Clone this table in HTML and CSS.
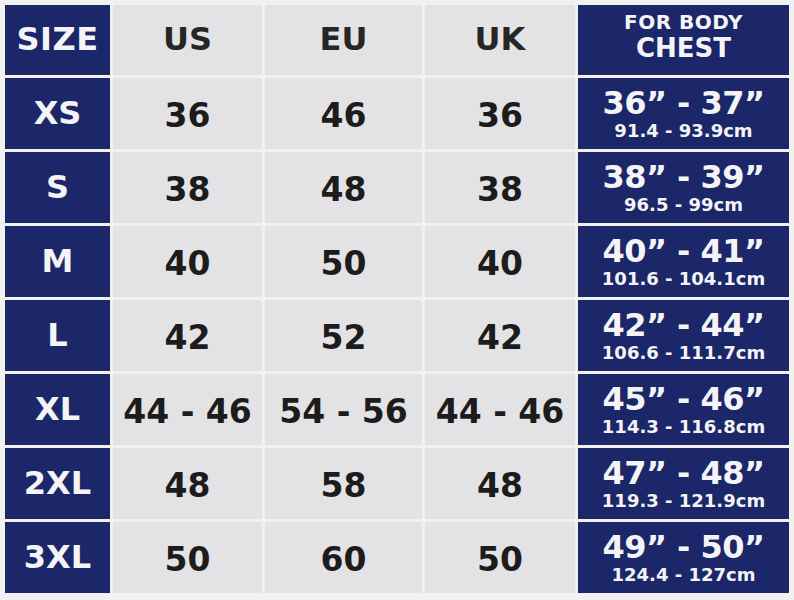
FILE: index.html
```html
<!DOCTYPE html>
<html>
<head>
<meta charset="utf-8">
<link rel="stylesheet" href="styles.css">
</head>
<body>
<div class="chart">
  <div class="cell navy head"><span class="size-head">SIZE</span></div>
  <div class="cell gray head"><span class="col-head">US</span></div>
  <div class="cell gray head"><span class="col-head">EU</span></div>
  <div class="cell gray head"><span class="col-head">UK</span></div>
  <div class="cell navy head chest-head"><span class="for">FOR BODY</span><span class="chest">CHEST</span></div>

  <div class="cell navy"><span class="size">XS</span></div>
  <div class="cell gray"><span class="num">36</span></div>
  <div class="cell gray"><span class="num">46</span></div>
  <div class="cell gray"><span class="num">36</span></div>
  <div class="cell navy meas"><span class="in">36” - 37”</span><span class="cm">91.4 - 93.9cm</span></div>

  <div class="cell navy"><span class="size">S</span></div>
  <div class="cell gray"><span class="num">38</span></div>
  <div class="cell gray"><span class="num">48</span></div>
  <div class="cell gray"><span class="num">38</span></div>
  <div class="cell navy meas"><span class="in">38” - 39”</span><span class="cm">96.5 - 99cm</span></div>

  <div class="cell navy"><span class="size">M</span></div>
  <div class="cell gray"><span class="num">40</span></div>
  <div class="cell gray"><span class="num">50</span></div>
  <div class="cell gray"><span class="num">40</span></div>
  <div class="cell navy meas"><span class="in">40” - 41”</span><span class="cm">101.6 - 104.1cm</span></div>

  <div class="cell navy"><span class="size">L</span></div>
  <div class="cell gray"><span class="num">42</span></div>
  <div class="cell gray"><span class="num">52</span></div>
  <div class="cell gray"><span class="num">42</span></div>
  <div class="cell navy meas"><span class="in">42” - 44”</span><span class="cm">106.6 - 111.7cm</span></div>

  <div class="cell navy"><span class="size">XL</span></div>
  <div class="cell gray"><span class="num">44 - 46</span></div>
  <div class="cell gray"><span class="num">54 - 56</span></div>
  <div class="cell gray"><span class="num">44 - 46</span></div>
  <div class="cell navy meas"><span class="in">45” - 46”</span><span class="cm">114.3 - 116.8cm</span></div>

  <div class="cell navy"><span class="size">2XL</span></div>
  <div class="cell gray"><span class="num">48</span></div>
  <div class="cell gray"><span class="num">58</span></div>
  <div class="cell gray"><span class="num">48</span></div>
  <div class="cell navy meas"><span class="in">47” - 48”</span><span class="cm">119.3 - 121.9cm</span></div>

  <div class="cell navy"><span class="size">3XL</span></div>
  <div class="cell gray"><span class="num">50</span></div>
  <div class="cell gray"><span class="num">60</span></div>
  <div class="cell gray"><span class="num">50</span></div>
  <div class="cell navy meas"><span class="in">49” - 50”</span><span class="cm">124.4 - 127cm</span></div>
</div>
</body>
</html>
```

FILE: styles.css
```css
html, body {
  margin: 0;
  padding: 0;
  background: #f1f1f2;
}
body {
  width: 794px;
  height: 600px;
  overflow: hidden;
  font-family: "DejaVu Sans", "Liberation Sans", sans-serif;
}
.chart {
  display: grid;
  grid-template-columns: 105px 149px 157px 150px 211px;
  grid-template-rows: 70px repeat(7, 71px);
  column-gap: 3px;
  row-gap: 3px;
  padding: 5px 5px 0 5px;
}
.cell {
  display: flex;
  flex-direction: column;
  align-items: center;
  justify-content: center;
}
.navy {
  background: #1b2769;
  color: #f4f4f6;
}
.gray {
  background: #e3e3e5;
  color: #1c1c1c;
}
.size-head {
  font-size: 32px;
  font-weight: bold;
  letter-spacing: 0.5px;
  margin-top: -3px;
}
.col-head {
  font-size: 32px;
  font-weight: bold;
  color: #262626;
  margin-top: -3px;
}
.chest-head {
  line-height: 1.15;
  padding-bottom: 6px;
}
.for {
  font-size: 20px;
  font-weight: bold;
  letter-spacing: 0.5px;
}
.chest {
  font-size: 26px;
  font-weight: bold;
}
.size {
  font-size: 32px;
  font-weight: bold;
  margin-top: -2px;
}
.num {
  font-size: 33px;
  font-weight: bold;
  margin-top: 4px;
}
.meas {
  line-height: 1;
}
.in {
  font-size: 32px;
  font-weight: bold;
  letter-spacing: -0.5px;
}
.cm {
  font-size: 18px;
  font-weight: bold;
  margin-top: 3px;
}
```
